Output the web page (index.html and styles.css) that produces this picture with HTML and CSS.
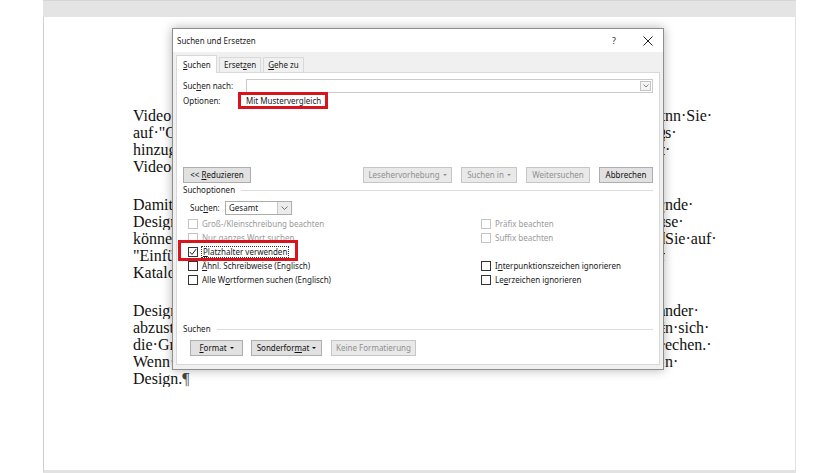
FILE: index.html
```html
<!DOCTYPE html>

<html>

<head>
	<meta charset="utf-8">
	<link rel="stylesheet" href="styles.css">
</head>

<body>
	<div class="workspace">
		<div class="ruler"></div>
		<div class="page">
			<div class="doc">
				<p>
					<span class="ln"><span class="head">Video·bietet·eine·leistungsstarke·Möglichkeit·zur·Unterstützung·Ihres·Standpunkts.·We</span><span class="tail">nn·Sie·</span></span>
					<span class="ln"><span class="head">auf·"Onlinevideo"·klicken,·können·Sie·den·Einbettungscode·für·das·Video·einfügen,·da</span><span class="tail">s·</span></span>
					<span class="ln"><span class="head">hinzugefügt·werden·soll.·Sie·können·auch·ein·Stichwort·eingeben,·um·online·nach·dem</span><span class="tail">·</span></span>
					<span class="ln"><span class="head">Videoclip·zu·suchen,·der·optimal·zu·Ihrem·Dokument·passt.¶</span></span>
				</p>
				<p>
					<span class="ln"><span class="head">Damit·Ihr·Dokument·ein·professionelles·Aussehen·erhält,·stellt·Word·einander·ergä</span><span class="tail">nde·</span></span>
					<span class="ln"><span class="head">Designs·für·Kopfzeile,·Fußzeile,·Deckblatt·und·Textfelder·zur·Verfügung.·Beispielswei</span><span class="tail">se·</span></span>
					<span class="ln"><span class="head">können·Sie·ein·passendes·Deckblatt·mit·Kopfzeile·und·Randleiste·hinzufügen.·Klicken·</span><span class="tail">Sie·auf·</span></span>
					<span class="ln"><span class="head">"Einfügen",·und·wählen·Sie·dann·die·gewünschten·Elemente·aus·den·verschiedenen·</span></span>
					<span class="ln"><span class="head">Katalogen·aus.¶</span></span>
				</p>
				<p>
					<span class="ln"><span class="head">Designs·und·Formatvorlagen·helfen·auch·dabei,·die·Elemente·Ihres·Dokuments·aufeina</span><span class="tail">nder·</span></span>
					<span class="ln"><span class="head">abzustimmen.·Wenn·Sie·auf·"Design"·klicken·und·ein·neues·Design·auswählen,·ändern·sic</span><span class="tail">n·sich·</span></span>
					<span class="ln"><span class="head">die·Grafiken,·Diagramme·und·SmartArt-Grafiken·so,·dass·sie·dem·neuen·Design·entspr</span><span class="tail">echen.·</span></span>
					<span class="ln"><span class="head">Wenn·Sie·Formatvorlagen·anwenden,·ändern·sich·die·Überschriften·passend·zum·neue</span><span class="tail">n·</span></span>
					<span class="ln"><span class="head">Design.<span class="pilcrow">¶</span></span></span>
				</p>
			</div>
		</div>
	</div>

	<div class="dialog">
		<div class="titlebar">
			<span class="title">Suchen und Ersetzen</span>
			<span class="tb-btn">?</span>
			<span class="tb-btn">
				<svg width="10" height="10" viewBox="0 0 10 10"><path d="M0.5 0.5 L9.5 9.5 M9.5 0.5 L0.5 9.5" stroke="#222" stroke-width="1"/></svg>
			</span>
		</div>

		<div class="tabs">
			<span class="tab active"><u>S</u>uchen</span>
			<span class="tab">Erset<u>z</u>en</span>
			<span class="tab"><u>G</u>ehe zu</span>
		</div>

		<div class="panel">
			<div class="field-row first">
				<span>Suc<u>h</u>en nach:</span>
				<div class="combo"><span class="combo-arrow"><svg width="6" height="4" viewBox="0 0 6 4"><path d="M0.5 0.5 L3 3 L5.5 0.5" fill="none" stroke="#666" stroke-width="0.8"/></svg></span></div>
			</div>
			<div class="field-row">
				<span>Optionen:</span>
				<span><span class="mark mark-opt">Mit Mustervergleich</span></span>
			</div>

			<div class="buttons">
				<button class="btn w-red"><span>&lt;&lt; <u>R</u>eduzieren</span></button>
				<div class="buttons-right">
					<button class="btn w-lese" disabled><span>Lesehervorhebung</span><i class="caret"></i></button>
					<button class="btn w-in" disabled><span>Suchen in</span><i class="caret"></i></button>
					<button class="btn w-weiter" disabled><span>Weitersuchen</span></button>
					<button class="btn w-abbr"><span>Abbrechen</span></button>
				</div>
			</div>

			<div class="group">
				<span>Suchoptionen</span>
				<span class="rule"></span>
			</div>

			<div class="scope">
				<span class="scope-label">Suc<u>h</u>en:</span>
				<div class="select">
					<span>Gesamt</span>
					<span class="select-arrow"><svg width="7" height="4" viewBox="0 0 7 4"><path d="M0.5 0.5 L3.5 3.5 L6.5 0.5" fill="none" stroke="#555" stroke-width="0.8"/></svg></span>
				</div>
			</div>

			<div class="options">
				<label class="opt disabled"><span class="box"></span><span>Groß-/Kleinschreibung beachten</span></label>
				<label class="opt disabled"><span class="box"></span><span>Präfix beachten</span></label>
				<label class="opt disabled"><span class="box"></span><span>Nur ganzes Wort suchen</span></label>
				<label class="opt disabled"><span class="box"></span><span>Suffix beachten</span></label>
				<label class="opt mark mark-opt2"><span class="box"><svg width="8" height="8" viewBox="0 0 8 8"><path d="M0.8 4 L3 6.4 L7.2 1" fill="none" stroke="#222" stroke-width="1"/></svg></span><span class="focus"><u>P</u>latzhalter verwenden</span></label>
				<span></span>
				<label class="opt"><span class="box"></span><span><u>Ä</u>hnl. Schreibweise (Englisch)</span></label>
				<label class="opt"><span class="box"></span><span>I<u>n</u>terpunktionszeichen ignorieren</span></label>
				<label class="opt"><span class="box"></span><span>Alle W<u>o</u>rtformen suchen (Englisch)</span></label>
				<label class="opt"><span class="box"></span><span>Le<u>e</u>rzeichen ignorieren</span></label>
			</div>

			<div class="group group-search">
				<span>Suchen</span>
				<span class="rule"></span>
			</div>

			<div class="buttons bottom">
				<button class="btn w-format"><span><u>F</u>ormat</span><i class="caret"></i></button>
				<button class="btn w-sonder"><span>Sonderfor<u>m</u>at</span><i class="caret"></i></button>
				<button class="btn w-keine" disabled><span>Keine Formatierung</span></button>
			</div>
		</div>
	</div>
</body>

</html>
```

FILE: styles.css
```css
* {
	box-sizing: border-box;
}

body {
	margin: 0;
	background: #fff;
	width: 840px;
	height: 473px;
	overflow: hidden;
}

.workspace {
	margin-left: 43px;
	width: 753px;
	height: 473px;
	display: flex;
	flex-direction: column;
}

.ruler {
	height: 17px;
	background: #e4e4e4;
	border-top: 1px solid #d6d6d6;
}

.page {
	height: 456px;
	border-left: 1px solid #cfcfcf;
	border-right: 1px solid #e2e2e2;
	border-bottom: 3px solid #e2e2e2;
	background: #fff;
	overflow: hidden;
}

.doc {
	padding: 90px 0 0 89px;
	font-family: "Liberation Serif", "Times New Roman", serif;
	font-size: 16px;
	line-height: 17px;
	color: #111;
}

.doc p {
	margin: 0 0 21px;
}

/* the middle of each line sits under the dialog */
.ln {
	display: grid;
	grid-template-columns: 532px auto;
	white-space: nowrap;
}

.head {
	overflow: hidden;
}

.pilcrow {
	color: #444;
}

/* dialog */

.dialog {
	position: absolute;
	left: 172px;
	top: 28px;
	width: 492px;
	height: 342px;
	background: #f0f0f0;
	border: 1px solid #8e8e8e;
	box-shadow: 0 0 10px rgba(0, 0, 0, 0.3);
	font-family: "Noto Sans", sans-serif;
	font-size: 8px;
	line-height: 14px;
	color: #1a1a1a;
	display: flex;
	flex-direction: column;
}

.dialog u {
	text-decoration-thickness: 1px;
	text-underline-offset: 1px;
}

.titlebar {
	height: 23px;
	background: #fff;
	display: flex;
	align-items: center;
	padding-left: 4px;
	gap: 4px;
}

.title {
	flex: 1;
}

.tb-btn {
	width: 30px;
	display: flex;
	justify-content: center;
	align-items: center;
	font-size: 9px;
	color: #333;
}

.tabs {
	height: 20px;
	display: flex;
	align-items: flex-end;
	padding-left: 3px;
	gap: 2px;
	position: relative;
	z-index: 1;
}

.tab {
	height: 15px;
	line-height: 13px;
	border: 1px solid #d9d9d9;
	border-bottom: none;
	background: #f0f0f0;
	padding: 0 4px;
}

.tab.active {
	height: 18px;
	margin-bottom: -1px;
	background: #fff;
	padding: 0 6px;
	line-height: 17px;
	width: 41px;
}

.panel {
	flex: 1;
	margin: 0 3px 4px;
	background: #fff;
	border: 1px solid #d9d9d9;
	padding: 0 6px;
}

.field-row {
	display: grid;
	grid-template-columns: 63px 1fr;
	align-items: center;
	height: 14px;
	margin-top: 1px;
}

.field-row.first {
	margin-top: 6px;
}

.combo {
	height: 14px;
	border: 1px solid #cacaca;
	display: flex;
	justify-content: flex-end;
	padding: 1px;
}

.combo-arrow {
	width: 11px;
	border: 1px solid #c4c4c4;
	background: #f4f4f4;
	display: flex;
	align-items: center;
	justify-content: center;
}

.mark {
	position: relative;
}

.mark::after {
	content: "";
	position: absolute;
	border: 3px solid #d8151d;
}

.mark-opt::after {
	left: -8px;
	right: -7px;
	top: -3px;
	bottom: -3px;
}

.mark-opt2 {
	justify-self: start;
}

.mark-opt2::after {
	left: -10px;
	right: -10px;
	top: -5px;
	bottom: -2px;
}

.buttons {
	display: flex;
	margin-top: 59px;
}

.buttons-right {
	margin-left: auto;
	display: flex;
	gap: 9px;
}

.btn {
	height: 16px;
	padding: 0;
	font: inherit;
	line-height: 14px;
	background: #e1e1e1;
	border: 1px solid #adadad;
	color: #111;
	display: inline-flex;
	align-items: center;
	justify-content: center;
	white-space: pre;
}

.btn:disabled {
	background: #e9e9e9;
	border-color: #c6c6c6;
	color: #909090;
}

.caret {
	display: inline-block;
	margin-left: 3px;
	border-left: 2px solid transparent;
	border-right: 2px solid transparent;
	border-top: 2px solid currentColor;
}

.w-red { width: 68px; }
.w-lese { width: 89px; }
.w-in { width: 56px; }
.w-weiter { width: 64px; }
.w-abbr { width: 54px; }
.w-format { width: 53px; }
.w-sonder { width: 71px; margin-left: 8px; }
.w-keine { width: 85px; margin-left: 9px; }

.group {
	height: 14px;
	display: flex;
	align-items: center;
}

.rule {
	flex: 1;
	height: 1px;
	margin-left: 6px;
	background: #dcdcdc;
}

.group-search {
	margin-top: 35px;
}

.scope {
	display: flex;
	align-items: center;
	margin-top: 4px;
	padding-left: 7px;
}

.scope-label {
	width: 35px;
}

.select {
	width: 67px;
	height: 14px;
	border: 1px solid #acacac;
	display: flex;
	align-items: center;
	padding-left: 3px;
}

.select span:first-child {
	flex: 1;
}

.select-arrow {
	width: 14px;
	height: 12px;
	border-left: 1px solid #c8c8c8;
	background: #ececec;
	display: flex;
	align-items: center;
	justify-content: center;
}

.options {
	display: grid;
	grid-template-columns: 293px 1fr;
	grid-auto-rows: 14px;
	margin-top: 2px;
	padding-left: 5px;
}

.opt {
	display: flex;
	align-items: center;
	gap: 4px;
	white-space: nowrap;
}

.box {
	width: 10px;
	height: 10px;
	border: 1px solid #333;
	background: #fff;
	display: flex;
	align-items: center;
	justify-content: center;
}

.opt.disabled {
	color: #9a9a9a;
}

.opt.disabled .box {
	border-color: #c4c4c4;
}

.focus {
	outline: 1px dotted #333;
	outline-offset: 0;
	padding: 0 1px;
	line-height: 10px;
}

.buttons.bottom {
	margin-top: 4px;
	padding-left: 7px;
}
```
